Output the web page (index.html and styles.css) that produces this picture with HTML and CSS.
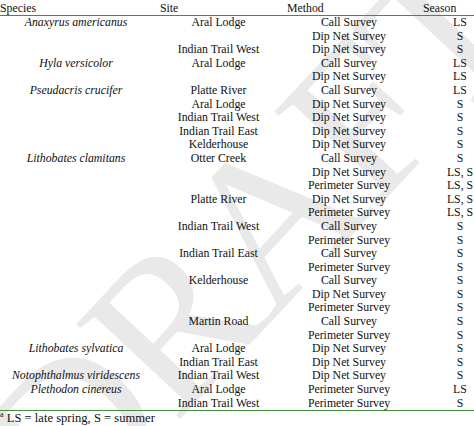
FILE: index.html
```html
<!DOCTYPE html>
<html>
<head>
<meta charset="utf-8">
<link rel="stylesheet" href="styles.css">
</head>
<body>
<div class="page">
  <div class="watermark" aria-hidden="true">DRAFT</div>
  <table class="data">
    <colgroup>
      <col class="c-species"><col class="c-site"><col class="c-method"><col class="c-season">
    </colgroup>
    <thead>
      <tr>
        <th class="h-species">Species</th>
        <th class="h-site">Site</th>
        <th class="h-method">Method</th>
        <th class="h-season">Season</th>
      </tr>
    </thead>
    <tbody>
      <tr><td class="sp">Anaxyrus americanus</td><td>Aral Lodge</td><td>Call Survey</td><td>LS</td></tr>
      <tr><td></td><td></td><td>Dip Net Survey</td><td>S</td></tr>
      <tr><td></td><td>Indian Trail West</td><td>Dip Net Survey</td><td>S</td></tr>
      <tr><td class="sp">Hyla versicolor</td><td>Aral Lodge</td><td>Call Survey</td><td>LS</td></tr>
      <tr><td></td><td></td><td>Dip Net Survey</td><td>LS</td></tr>
      <tr><td class="sp">Pseudacris crucifer</td><td>Platte River</td><td>Call Survey</td><td>LS</td></tr>
      <tr><td></td><td>Aral Lodge</td><td>Dip Net Survey</td><td>S</td></tr>
      <tr><td></td><td>Indian Trail West</td><td>Dip Net Survey</td><td>S</td></tr>
      <tr><td></td><td>Indian Trail East</td><td>Dip Net Survey</td><td>S</td></tr>
      <tr><td></td><td>Kelderhouse</td><td>Dip Net Survey</td><td>S</td></tr>
      <tr><td class="sp">Lithobates clamitans</td><td>Otter Creek</td><td>Call Survey</td><td>S</td></tr>
      <tr><td></td><td></td><td>Dip Net Survey</td><td>LS, S</td></tr>
      <tr><td></td><td></td><td>Perimeter Survey</td><td>LS, S</td></tr>
      <tr><td></td><td>Platte River</td><td>Dip Net Survey</td><td>LS, S</td></tr>
      <tr><td></td><td></td><td>Perimeter Survey</td><td>LS, S</td></tr>
      <tr><td></td><td>Indian Trail West</td><td>Call Survey</td><td>S</td></tr>
      <tr><td></td><td></td><td>Perimeter Survey</td><td>S</td></tr>
      <tr><td></td><td>Indian Trail East</td><td>Call Survey</td><td>S</td></tr>
      <tr><td></td><td></td><td>Perimeter Survey</td><td>S</td></tr>
      <tr><td></td><td>Kelderhouse</td><td>Call Survey</td><td>S</td></tr>
      <tr><td></td><td></td><td>Dip Net Survey</td><td>S</td></tr>
      <tr><td></td><td></td><td>Perimeter Survey</td><td>S</td></tr>
      <tr><td></td><td>Martin Road</td><td>Call Survey</td><td>S</td></tr>
      <tr><td></td><td></td><td>Perimeter Survey</td><td>S</td></tr>
      <tr><td class="sp">Lithobates sylvatica</td><td>Aral Lodge</td><td>Dip Net Survey</td><td>S</td></tr>
      <tr><td></td><td>Indian Trail East</td><td>Dip Net Survey</td><td>S</td></tr>
      <tr><td class="sp">Notophthalmus viridescens</td><td>Indian Trail West</td><td>Dip Net Survey</td><td>S</td></tr>
      <tr><td class="sp">Plethodon cinereus</td><td>Aral Lodge</td><td>Perimeter Survey</td><td>LS</td></tr>
      <tr><td></td><td>Indian Trail West</td><td>Perimeter Survey</td><td>S</td></tr>
    </tbody>
  </table>
  <p class="footnote"><sup>a</sup> LS = late spring, S = summer</p>
</div>
</body>
</html>
```

FILE: styles.css
```css
html, body {
  margin: 0;
  padding: 0;
  overflow: hidden;
  background: #ffffff;
}
.page {
  position: relative;
  width: 474px;
  height: 426px;
  padding-top: 2px;
  box-sizing: border-box;
  overflow: hidden;
  font-family: "Liberation Serif", "Times New Roman", serif;
  color: #111;
}
.watermark {
  position: absolute;
  left: -90px;
  top: 128px;
  font-family: "Liberation Serif", "Times New Roman", serif;
  font-size: 215px;
  line-height: 215px;
  color: #e9e9e9;
  transform: rotate(-47deg);
  transform-origin: center center;
  white-space: nowrap;
  z-index: 0;
  letter-spacing: -4px;
}
.data {
  position: relative;
  z-index: 1;
  table-layout: fixed;
  border-collapse: collapse;
  width: 507px;
  font-size: 11.8px;
}
.c-species { width: 152px; }
.c-site { width: 133px; }
.c-method { width: 128px; }
.c-season { width: 94px; }
.data th {
  font-weight: normal;
  text-align: left;
  padding: 0;
  height: 13px;
  line-height: 13px;
  border-bottom: 1.5px solid #3f8f3f;
  vertical-align: middle;
}
.h-species { padding-left: 0; }
.data th.h-site { padding-left: 8px; }
.data th.h-method { padding-left: 2px; }
.data th.h-season { padding-left: 10px; }
.data td {
  text-align: center;
  padding: 0;
  height: 13.6px;
  line-height: 13.6px;
  white-space: nowrap;
}
.data tbody tr:last-child td {
  border-bottom: 1.5px solid #3f8f3f;
}
.sp { font-style: italic; }
.footnote {
  position: relative;
  z-index: 1;
  margin: 0;
  padding-top: 0;
  font-size: 12.6px;
  line-height: 14px;
}
.footnote sup {
  font-size: 8px;
  vertical-align: top;
  line-height: 8px;
}
```
